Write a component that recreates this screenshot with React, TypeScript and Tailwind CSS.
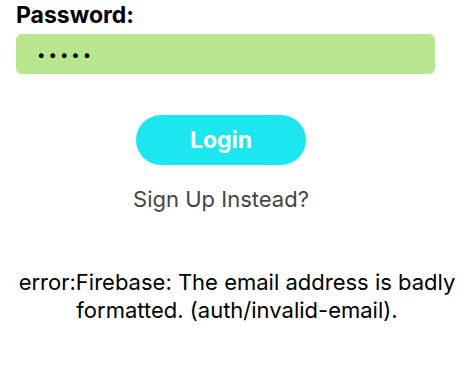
import { useState } from 'react'

export default function App() {
  const [password, setPassword] = useState('12345')

  return (
    <div className="w-[474px] h-[381px] bg-white overflow-hidden font-['Inter','Liberation_Sans',sans-serif]">
      <div className="px-4">
        <label className="block text-[23px] leading-[30px] font-bold text-black">Password:</label>
        <input
          type="password"
          value={password}
          onChange={(e) => setPassword(e.target.value)}
          className="mt-[4px] w-[419px] h-[40px] pl-[21px] rounded-md bg-[#b8e78f] text-[15px] tracking-[3px] text-black outline-none"
        />
      </div>

      <div className="ml-4 w-[410px] flex flex-col items-center mt-[41px]">
        <button
          type="button"
          className="w-[170px] h-[50px] rounded-full bg-[#1ce6ef] text-white text-[23px] font-bold"
        >
          Login
        </button>
        <button type="button" className="mt-[20px] text-[22px] leading-[28px] text-[#444]">
          Sign Up Instead?
        </button>
      </div>

      <p className="mt-[55px] text-center text-[22px] leading-[28px] text-black">
        error:Firebase: The email address is badly formatted. (auth/invalid-email).
      </p>
    </div>
  )
}
